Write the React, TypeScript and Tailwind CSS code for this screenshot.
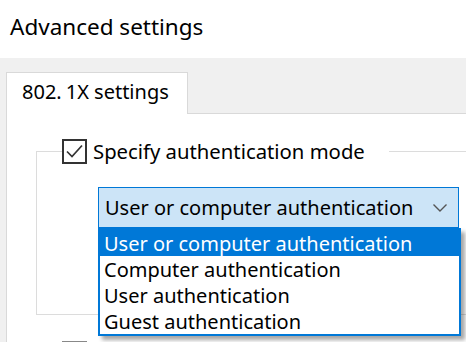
import React from 'react';

const options = [
    "User or computer authentication",
    "Computer authentication",
    "User authentication",
    "Guest authentication",
];

const CheckMark = () => (
    <svg width="21" height="21" viewBox="0 0 21 21" className="block">
        <path d="M3 10.5 L8 15.5 L18 4.5" fill="none" stroke="#333333" strokeWidth="1.7" />
    </svg>
);

const Chevron = () => (
    <svg width="16" height="10" viewBox="0 0 16 10" className="block">
        <path d="M1.5 1.5 L8 8 L14.5 1.5" fill="none" stroke="#555555" strokeWidth="1.4" />
    </svg>
);

export default function App() {
    return (
        <div
            className="w-[466px] h-[342px] overflow-hidden flex flex-col bg-[#f0f0f0] text-black text-[20px] leading-none"
            style={{ fontFamily: '"Noto Sans", "Open Sans", sans-serif' }}
        >
            {/* window title */}
            <div className="h-[58px] shrink-0 bg-white pl-[10px] pt-[16px] text-[22.5px]">
                <span>Advanced settings</span>
            </div>

            <div className="flex-1 pl-[6px] pt-[14px] flex flex-col">
                {/* tab */}
                <div className="relative z-10 -mb-px w-[182px] h-[42px] bg-white border border-b-0 border-[#d9d9d9] pl-[15px] pt-[9px]">
                    802.<span className="ml-[4px]">1X</span> settings
                </div>

                {/* tab page */}
                <div className="flex-1 w-[520px] bg-white border-t border-l border-[#d9d9d9] pl-[29px] pt-[25px]">
                    <fieldset className="w-[520px] h-[176px] border border-[#dcdcdc]">
                        <legend className="ml-[25px] pr-[24px] flex items-center">
                            <span className="w-[25px] h-[25px] border-2 border-[#333333] bg-white flex items-center justify-center">
                                <CheckMark />
                            </span>
                            <span className="ml-[6px] text-[20.3px]">Specify authentication mode</span>
                        </legend>

                        <div className="relative ml-[61px] mt-[23px] w-[361px]">
                            <div className="h-[41px] bg-[#cce4f7] border border-[#0078d7] flex items-center justify-between pl-[6px] pr-[10px]">
                                <span>User or computer authentication</span>
                                <Chevron />
                            </div>

                            {/* open list */}
                            <ul className="absolute left-0 top-[41px] w-[363px] bg-white border-2 border-[#0078d7] shadow-[4px_4px_4px_rgba(0,0,0,0.35)]">
                                {options.map((opt, i) => (
                                    <li
                                        key={opt}
                                        className={
                                            i === 0
                                                ? "h-[26px] pl-[4px] pt-[1px] flex items-center bg-[#0078d7] text-white"
                                                : "h-[26px] pl-[4px] pt-[1px] flex items-center"
                                        }
                                    >
                                        {opt}
                                    </li>
                                ))}
                            </ul>
                        </div>
                    </fieldset>

                    <div className="mt-[26px] ml-[26px] w-[25px] h-[25px] border-2 border-[#888888]" />
                </div>
            </div>
        </div>
    );
}
